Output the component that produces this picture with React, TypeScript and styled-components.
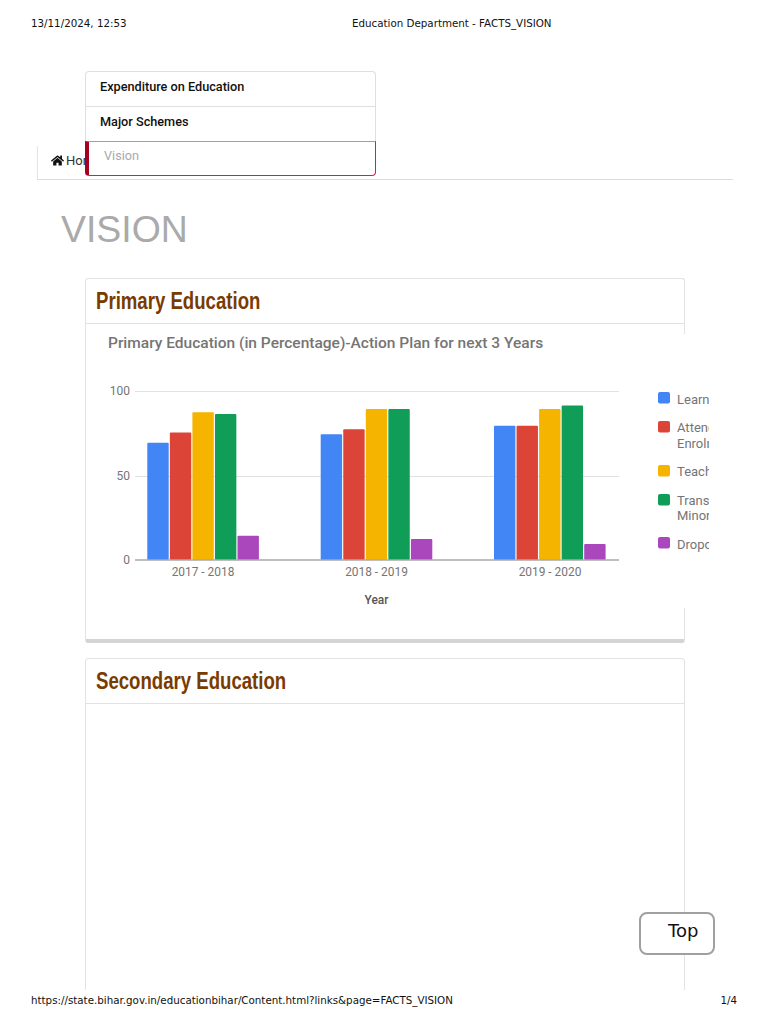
import React from 'react';
import styled, { createGlobalStyle } from 'styled-components';
import { FaHome } from 'react-icons/fa';

const GlobalStyle = createGlobalStyle`
	html,
	body {
		margin: 0;
		padding: 0;
		background: #fff;
	}
`;

const Page = styled.div`
	position: relative;
	width: 768px;
	height: 1024px;
	overflow: hidden;
	display: flex;
	flex-direction: column;
	font-family: 'Roboto', 'Liberation Sans', sans-serif;
`;

const PrintHeader = styled.header`
	height: 40px;
	box-sizing: border-box;
	padding: 17px 0 0 31px;
	display: grid;
	grid-template-columns: 321px 1fr;
	font-family: 'DejaVu Sans', sans-serif;
	font-size: 10.3px;
	line-height: 12px;
	color: #111;
`;

const PrintFooter = styled.footer`
	height: 34px;
	box-sizing: border-box;
	padding: 4px 31px 0;
	display: flex;
	justify-content: space-between;
	font-family: 'DejaVu Sans', sans-serif;
	font-size: 10.3px;
	line-height: 12px;
	color: #111;
`;

const Main = styled.main`
	position: relative;
	flex: 1;
	min-height: 0;
	overflow: hidden;
	padding-top: 106px;
`;

const SideMenu = styled.nav`
	position: absolute;
	z-index: 2;
	top: 31px;
	left: 85px;
	width: 291px;
	background: #fff;
`;

const MenuItem = styled.a<{ $active?: boolean }>`
	display: block;
	box-sizing: border-box;
	height: 35px;
	padding: ${(p) => (p.$active ? '6px 0 0 15px' : '7px 0 0 14px')};
	border: 1px solid #dfdfdf;
	border-bottom-width: 0;
	font-size: 12.7px;
	font-weight: 500;
	line-height: 16px;
	color: #111;
	&:first-child {
		border-radius: 4px 4px 0 0;
	}
	${(p) =>
		p.$active &&
		`
		border: 1px solid #cf2440;
		border-top-color: #e87f90;
		border-left: 4px solid #a50022;
		border-radius: 0 0 4px 4px;
		font-weight: 400;
		color: #aaa;
	`}
`;

const Breadcrumb = styled.div`
	box-sizing: border-box;
	height: 34px;
	margin: 0 35px 0 37px;
	padding: 0 0 4px 13px;
	display: flex;
	align-items: center;
	gap: 2px;
	border-left: 1px solid #e4e4e4;
	border-bottom: 1px solid #e2dcd0;
	font-size: 13px;
	color: #333;
	svg {
		color: #111;
	}
`;

const PageTitle = styled.h1`
	margin: 29px 0 0 61px;
	font-family: 'Liberation Sans', sans-serif;
	font-size: 37.4px;
	font-weight: 400;
	line-height: 41px;
	color: #aaa;
`;

const Card = styled.section<{ $open?: boolean }>`
	box-sizing: border-box;
	width: 600px;
	margin: ${(p) => (p.$open ? '15px' : '28px')} 0 0 85px;
	border: 1px solid #e2e2e2;
	border-bottom: ${(p) => (p.$open ? '1px solid #e2e2e2' : '4px solid #d4d4d4')};
	border-radius: 3px;
	height: ${(p) => (p.$open ? '400px' : '365px')};
`;

const CardTitle = styled.h2`
	box-sizing: border-box;
	height: 44.5px;
	margin: 0;
	padding: 8px 0 0 10px;
	border-bottom: 1px solid #e2e2e2;
	font-family: 'Liberation Sans', sans-serif;
	font-size: 24px;
	font-weight: 700;
	line-height: 28px;
	color: #7a3b00;
	span {
		display: inline-block;
		transform: scaleX(0.775);
		transform-origin: left center;
		white-space: nowrap;
	}
`;

const ChartFrame = styled.div`
	position: relative;
	margin-top: 10.5px;
	width: 623px;
	height: 274px;
	background: #fff;
	svg {
		display: block;
	}
`;

const TopButton = styled.button`
	position: absolute;
	z-index: 3;
	left: 639px;
	top: 872px;
	width: 76px;
	height: 43px;
	box-sizing: border-box;
	padding: 0 0 6px 27px;
	text-align: left;
	background: #fff;
	border: 2px solid #a0a0a0;
	border-radius: 8px;
	font-family: 'DejaVu Sans', sans-serif;
	font-size: 18px;
	color: #111;
`;

const series = ['#4285f4', '#db4437', '#f4b400', '#0f9d58', '#ab47bc'];

const groups = [
	{ label: '2017 - 2018', x: 147.3, center: 203, values: [70, 76, 88, 87, 15] },
	{ label: '2018 - 2019', x: 320.7, center: 376.5, values: [75, 78, 90, 90, 13] },
	{ label: '2019 - 2020', x: 494, center: 550, values: [80, 80, 90, 92, 10] },
];

const legend = [
	{ y: 392, lines: [{ t: 'Learning Outcome', y: 403.5 }] },
	{ y: 421, lines: [{ t: 'Attendance', y: 432.2 }, { t: 'Enrolment', y: 447.5 }] },
	{ y: 465, lines: [{ t: 'Teachers', y: 475.5 }] },
	{ y: 494, lines: [{ t: 'Transition', y: 505.2 }, { t: 'Minority', y: 519.8 }] },
	{ y: 537, lines: [{ t: 'Dropout', y: 549.2 }] },
];

const BASE = 561;
const SCALE = 1.69;

const Chart = () => (
	<svg width={623} height={274} viewBox="86 334 623 274">
		<g fontFamily="Roboto, sans-serif">
			<text x={108} y={348} fontSize={15.5} fontWeight={500} fill="#757575">
				Primary Education (in Percentage)-Action Plan for next 3 Years
			</text>
			<line x1={135} x2={619} y1={391.5} y2={391.5} stroke="#e2e2e2" />
			<line x1={135} x2={619} y1={476.5} y2={476.5} stroke="#e2e2e2" />
			{groups.map((g) =>
				g.values.map((v, i) => (
					<rect
						key={g.label + i}
						x={g.x + i * 22.55}
						y={BASE - v * SCALE}
						width={21.4}
						height={v * SCALE - 1}
						rx={1}
						fill={series[i]}
					/>
				)),
			)}
			<line x1={135} x2={619} y1={560} y2={560} stroke="#a8a8a8" strokeWidth={1.4} />
			<g fontSize={12} fill="#757575" textAnchor="end">
				<text x={130} y={395}>100</text>
				<text x={130} y={480}>50</text>
				<text x={130} y={564}>0</text>
			</g>
			<g fontSize={11.9} fill="#757575" textAnchor="middle">
				{groups.map((g) => (
					<text key={g.label} x={g.center} y={576}>
						{g.label}
					</text>
				))}
			</g>
			<text x={376.5} y={604} fontSize={11.9} fontWeight={500} fill="#555" textAnchor="middle">
				Year
			</text>
			{legend.map((l, i) => (
				<g key={l.y}>
					<rect x={658} y={l.y} width={12} height={11.5} rx={2} fill={series[i]} />
					{l.lines.map((line) => (
						<text key={line.t} x={677} y={line.y} fontSize={13} fill="#757575">
							{line.t}
						</text>
					))}
				</g>
			))}
		</g>
	</svg>
);

const App = () => {
	return (
		<Page>
			<GlobalStyle />
			<PrintHeader>
				<span>13/11/2024, 12:53</span>
				<span>Education Department - FACTS_VISION</span>
			</PrintHeader>
			<Main>
				<SideMenu>
					<MenuItem>Expenditure on Education</MenuItem>
					<MenuItem>Major Schemes</MenuItem>
					<MenuItem $active>Vision</MenuItem>
				</SideMenu>
				<Breadcrumb>
					<FaHome size={13} />
					<span>Home</span>
				</Breadcrumb>
				<PageTitle>VISION</PageTitle>
				<Card>
					<CardTitle>
						<span>Primary Education</span>
					</CardTitle>
					<ChartFrame>
						<Chart />
					</ChartFrame>
				</Card>
				<Card $open>
					<CardTitle>
						<span>Secondary Education</span>
					</CardTitle>
				</Card>
				<TopButton>Top</TopButton>
			</Main>
			<PrintFooter>
				<span>https://state.bihar.gov.in/educationbihar/Content.html?links&amp;page=FACTS_VISION</span>
				<span>1/4</span>
			</PrintFooter>
		</Page>
	);
};

export default App;
